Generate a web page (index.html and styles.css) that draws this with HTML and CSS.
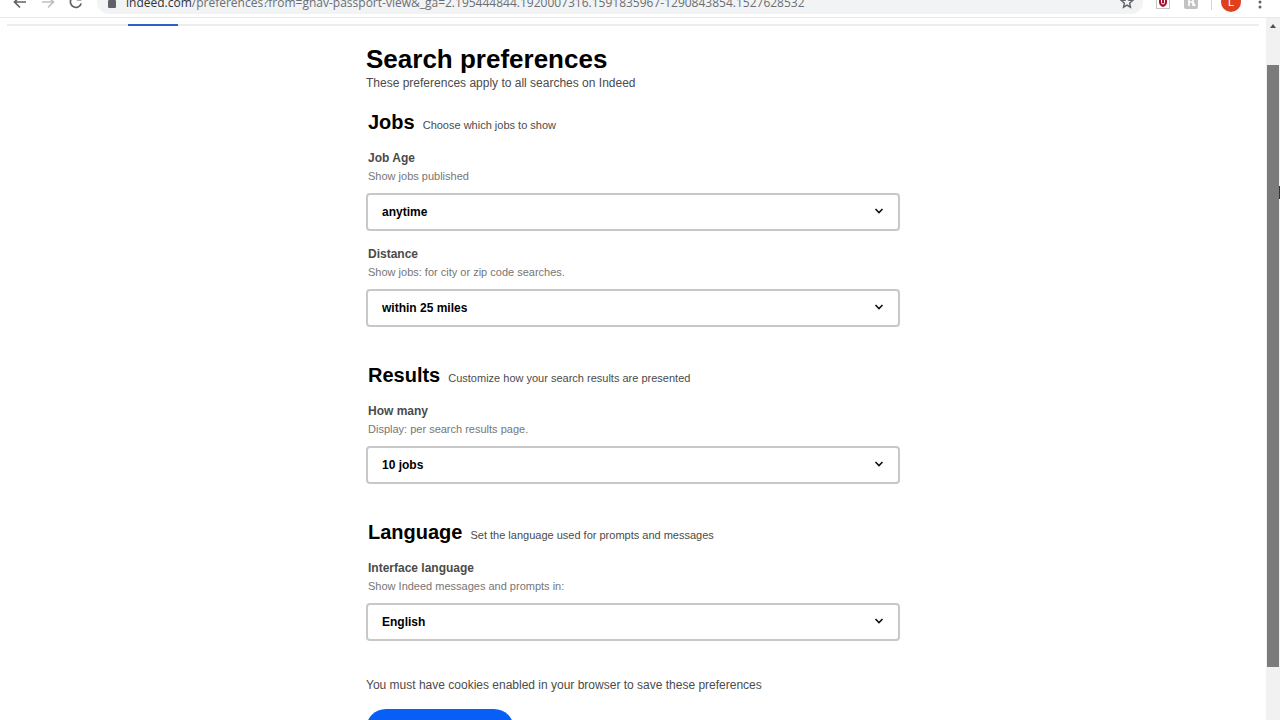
FILE: index.html
```html
<!DOCTYPE html>
<html lang="en">

<head>
	<meta charset="UTF-8">
	<title>Search preferences</title>
	<link rel="stylesheet" href="styles.css">
</head>

<body>
	<header class="browser">
		<div class="toolbar">
			<div class="nav_buttons">
				<button type="button" aria-label="Back">
					<svg width="16" height="16" viewBox="0 0 16 16" fill="none" stroke="#5f6368" stroke-width="1.7"><path d="M14 8H3M8 2.5L2.5 8L8 13.5" /></svg>
				</button>
				<button type="button" aria-label="Forward">
					<svg width="16" height="16" viewBox="0 0 16 16" fill="none" stroke="#bdc0c4" stroke-width="1.7"><path d="M2 8H13M8 2.5L13.5 8L8 13.5" /></svg>
				</button>
				<button type="button" aria-label="Reload">
					<svg width="16" height="16" viewBox="0 0 16 16" fill="none" stroke="#5f6368" stroke-width="1.7"><path d="M13.2 9.4A5.5 5.5 0 1 1 12 4.2" /><path d="M13.5 1.5V6.5H8.5Z" fill="#5f6368" stroke="none" /></svg>
				</button>
			</div>
			<div class="address">
				<svg width="10" height="14" viewBox="0 0 10 14"><rect x="1" y="4" width="8" height="8" rx="1" fill="#5f6368" /><path d="M2.5 5V3.5a2.5 2.5 0 0 1 5 0V5" fill="none" stroke="#5f6368" stroke-width="1.4" /></svg>
				<span class="url"><span class="host">indeed.com</span>/preferences?from=gnav-passport-view&amp;_ga=2.195444844.1920007316.1591835967-1290843854.1527628532</span>
				<svg class="star" width="14" height="14" viewBox="0 0 14 14" fill="none" stroke="#5f6368" stroke-width="1.4"><path d="M7 0.5L8.6 4.2L12.6 4.5L9.6 7.2L10.5 11.2L7 9.1L3.5 11.2L4.4 7.2L1.4 4.5L5.4 4.2Z" /></svg>
			</div>
			<div class="extensions">
				<svg width="14" height="14" viewBox="0 0 14 14"><rect x="0.5" y="0.5" width="13" height="13" fill="#fff" stroke="#c4c4c4" /><path d="M3 2L7 1L11 2V7Q11 10.5 7 12Q3 10.5 3 7Z" fill="#a5122d" /><path d="M5.5 4.5V7.5Q5.5 9 7 9Q8.5 9 8.5 7.5V4.5" fill="none" stroke="#fff" /></svg>
				<svg width="14" height="14" viewBox="0 0 14 14"><rect width="14" height="14" rx="2" fill="#c2c2c2" /><path d="M5 3V11M5 7H9M9 3V11M9 7L11 11" fill="none" stroke="#fff" stroke-width="1.6" /></svg>
				<span class="divider"></span>
				<span class="avatar">L</span>
				<svg class="menu" width="4" height="16" viewBox="0 0 4 16" fill="#5f6368"><circle cx="2" cy="3" r="1.5" /><circle cx="2" cy="8" r="1.5" /><circle cx="2" cy="13" r="1.5" /></svg>
			</div>
		</div>
	</header>

	<div class="window">
		<div class="page">
			<div class="tabs"><span class="tab_active"></span></div>

			<main class="preferences">
				<h1>Search preferences</h1>
				<p class="intro">These preferences apply to all searches on Indeed</p>

				<form>
					<section>
						<div class="section_head">
							<h2>Jobs</h2>
							<p>Choose which jobs to show</p>
						</div>
						<div class="field">
							<label for="job_age">Job Age</label>
							<p>Show jobs published</p>
							<div class="select_box">
								<select id="job_age">
									<option>anytime</option>
								</select>
								<svg width="10" height="8" viewBox="0 0 10 8"><path d="M1.5 2L5 5.5L8.5 2" /></svg>
							</div>
						</div>
						<div class="field">
							<label for="distance">Distance</label>
							<p>Show jobs: for city or zip code searches.</p>
							<div class="select_box">
								<select id="distance">
									<option>within 25 miles</option>
								</select>
								<svg width="10" height="8" viewBox="0 0 10 8"><path d="M1.5 2L5 5.5L8.5 2" /></svg>
							</div>
						</div>
					</section>

					<section>
						<div class="section_head">
							<h2>Results</h2>
							<p>Customize how your search results are presented</p>
						</div>
						<div class="field">
							<label for="how_many">How many</label>
							<p>Display: per search results page.</p>
							<div class="select_box">
								<select id="how_many">
									<option>10 jobs</option>
								</select>
								<svg width="10" height="8" viewBox="0 0 10 8"><path d="M1.5 2L5 5.5L8.5 2" /></svg>
							</div>
						</div>
					</section>

					<section>
						<div class="section_head">
							<h2>Language</h2>
							<p>Set the language used for prompts and messages</p>
						</div>
						<div class="field">
							<label for="language">Interface language</label>
							<p>Show Indeed messages and prompts in:</p>
							<div class="select_box">
								<select id="language">
									<option>English</option>
								</select>
								<svg width="10" height="8" viewBox="0 0 10 8"><path d="M1.5 2L5 5.5L8.5 2" /></svg>
							</div>
						</div>
					</section>

					<p class="cookies">You must have cookies enabled in your browser to save these preferences</p>
					<button type="submit" class="save" aria-label="Save preferences"></button>
				</form>
			</main>
		</div>

		<div class="scrollbar">
			<svg width="8" height="16" viewBox="0 0 8 16"><path d="M4 6L7 10H1Z" fill="#505050" /></svg>
			<div class="thumb"></div>
			<span class="pointer"></span>
		</div>
	</div>
</body>

</html>
```
FILE: styles.css
```css
* {
	box-sizing: border-box;
}

body {
	margin: 0;
	height: 100vh;
	display: flex;
	flex-direction: column;
	overflow: hidden;
	background: #fff;
	color: #4b4b4b;
	font-family: "Liberation Sans", Arial, sans-serif;
	font-size: 12px;
	line-height: 18px;
}

h1,
h2,
p {
	margin: 0;
}

svg {
	display: block;
	flex: none;
}

/* browser bar, scrolled half out at the top */
.browser {
	flex: none;
	height: 18px;
	display: flex;
	align-items: flex-end;
	overflow: hidden;
	border-bottom: 1px solid #e8e8e8;
}

.toolbar {
	flex: 1;
	height: 30px;
	display: flex;
	align-items: center;
	padding: 0 18px 0 12px;
}

.nav_buttons {
	display: flex;
	gap: 12px;
	margin-right: 13px;
}

.nav_buttons button {
	padding: 0;
	border: 0;
	background: none;
}

.address {
	flex: 1;
	height: 24px;
	display: flex;
	align-items: center;
	padding: 1px 9px 0 10px;
	border-radius: 12px;
	background: #f1f3f4;
}

.url {
	margin-left: 9px;
	color: #6b6f73;
	font-family: "Open Sans", sans-serif;
	font-size: 12px;
	white-space: nowrap;
}

.host {
	color: #303236;
}

.star {
	margin-left: auto;
}

.extensions {
	display: flex;
	align-items: center;
	margin-left: 13px;
}

.extensions svg + svg {
	margin-left: 14px;
}

.divider {
	width: 1px;
	height: 16px;
	margin: 0 9px 0 13px;
	background: #d5d7da;
}

.avatar {
	width: 20px;
	height: 20px;
	border-radius: 50%;
	background: #e0411d;
	color: #fff;
	font-size: 11px;
	line-height: 20px;
	text-align: center;
}

.extensions .menu {
	margin-left: 17px;
}

.window {
	flex: 1;
	min-height: 0;
	display: flex;
}

.page {
	flex: 1;
	overflow: hidden;
}

.tabs {
	height: 8px;
	margin: 0 7px;
	padding-left: 121px;
	display: flex;
	align-items: flex-end;
	background: linear-gradient(#ededed, #ededed) bottom / 100% 2px no-repeat;
}

.tab_active {
	width: 50px;
	height: 2px;
	background: #2a62c8;
}

.preferences {
	max-width: 534px;
	margin: 0 auto;
	padding-top: 18px;
}

h1 {
	color: #000;
	font-size: 26px;
	line-height: 30px;
}

section {
	margin-top: 35px;
}

.intro + form section:first-child {
	margin-top: 17px;
}

.section_head {
	display: flex;
	align-items: baseline;
	gap: 8px;
	padding-left: 2px;
}

h2 {
	color: #000;
	font-size: 20px;
	line-height: 26px;
}

.section_head p,
.field p {
	font-size: 11px;
}

.field {
	margin-top: 14px;
}

.field label {
	display: block;
	padding-left: 2px;
	font-weight: bold;
}

.field p {
	padding-left: 2px;
	color: #767676;
}

.select_box {
	position: relative;
	margin-top: 8px;
}

.select_box select {
	display: block;
	width: 100%;
	height: 38px;
	padding: 0 14px;
	border: 2px solid #c8c8c8;
	border-radius: 4px;
	appearance: none;
	background: #fff;
	color: #000;
	font: bold 12px "Liberation Sans", Arial, sans-serif;
}

/* chevron lies over the select */
.select_box svg {
	position: absolute;
	top: 14px;
	right: 16px;
	fill: none;
	stroke: #111;
	stroke-width: 1.6;
	pointer-events: none;
}

.cookies {
	margin-top: 35px;
}

.save {
	display: block;
	width: 148px;
	height: 40px;
	margin-top: 15px;
	border: 0;
	border-radius: 20px;
	background: #085ff7;
}

.scrollbar {
	position: relative;
	flex: none;
	width: 14px;
	display: flex;
	flex-direction: column;
	align-items: center;
	background: #f1f1f1;
}

.thumb {
	width: 12px;
	height: 602px;
	margin-top: 31px;
	background: #7b7b7b;
}

/* edge of the mouse pointer */
.pointer {
	position: absolute;
	top: 168px;
	right: 0;
	width: 1px;
	height: 13px;
	background: #333;
}
```
